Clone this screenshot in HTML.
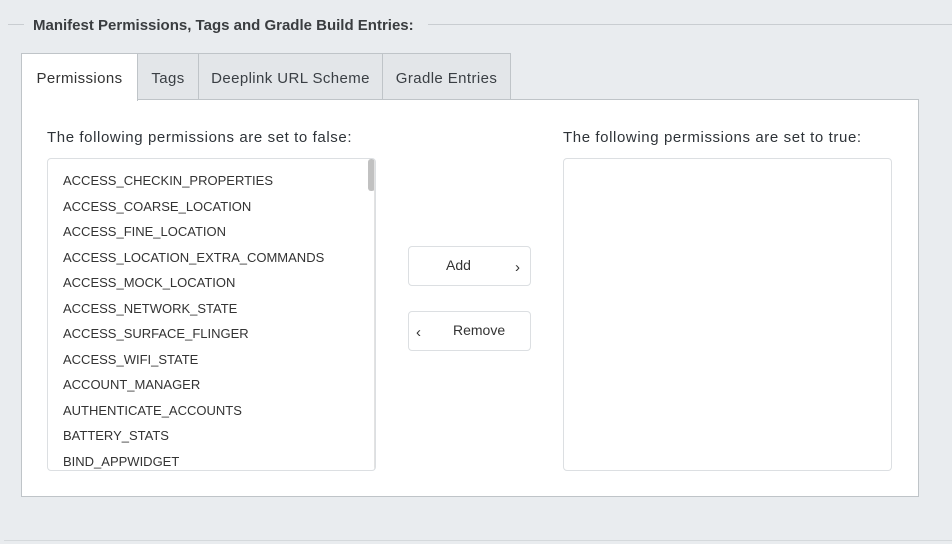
<!DOCTYPE html>
<html><head><style>
body{margin:0;width:952px;height:544px;background:#e9ecef;font-family:"Liberation Sans",Arial,sans-serif;position:relative;overflow:hidden;color:#333}
.a{position:absolute}
.tab{position:absolute;top:53px;height:46px;background:#e3e6e9;border:1px solid #bfc4c8;border-bottom:none;font-size:15px;letter-spacing:0.4px;line-height:49px;text-align:center;color:#3a3f44;box-sizing:border-box}
.box{position:absolute;top:158px;width:329px;height:313px;background:#fff;border:1px solid #dcdfe2;border-radius:4px;box-sizing:border-box;overflow:hidden}
.it{font-size:13px;color:#333;height:25.5px;line-height:25.5px}
.btn{position:absolute;left:408px;width:123px;height:40px;border:1px solid #dcdfe2;border-radius:4px;background:#fff;box-sizing:border-box;font-size:14px;color:#333}
</style></head><body>
<div class="a" style="left:8px;top:24px;width:16px;height:1px;background:#c9cdd1"></div>
<div class="a" style="left:428px;top:24px;width:524px;height:1px;background:#c9cdd1"></div>
<div class="a" style="left:33px;top:17px;font-size:15px;font-weight:bold;color:#3a3d40">Manifest Permissions, Tags and Gradle Build Entries:</div>
<div class="a" style="left:21px;top:99px;width:898px;height:398px;background:#fff;border:1px solid #bfc4c8;box-sizing:border-box"></div>
<div class="tab" style="left:21px;width:117px;background:#fff;height:48px;z-index:2;color:#333">Permissions</div>
<div class="tab" style="left:137px;width:62px">Tags</div>
<div class="tab" style="left:198px;width:185px">Deeplink URL Scheme</div>
<div class="tab" style="left:382px;width:129px">Gradle Entries</div>
<div class="a" style="left:47px;top:129px;font-size:15px;letter-spacing:0.6px;color:#2e3338">The following permissions are set to false:</div>
<div class="a" style="left:563px;top:129px;font-size:15px;letter-spacing:0.6px;color:#2e3338">The following permissions are set to true:</div>
<div class="box" style="left:47px">
<div style="position:absolute;right:0;top:0;width:7px;height:32px;background:#c1c1c1;border-radius:3px"></div>
<div style="position:absolute;right:0;top:0;width:1px;height:100%;background:#e2e2e2"></div>
<div style="padding:9px 0 0 15px">
<div class="it">ACCESS_CHECKIN_PROPERTIES</div>
<div class="it">ACCESS_COARSE_LOCATION</div>
<div class="it">ACCESS_FINE_LOCATION</div>
<div class="it">ACCESS_LOCATION_EXTRA_COMMANDS</div>
<div class="it">ACCESS_MOCK_LOCATION</div>
<div class="it">ACCESS_NETWORK_STATE</div>
<div class="it">ACCESS_SURFACE_FLINGER</div>
<div class="it">ACCESS_WIFI_STATE</div>
<div class="it">ACCOUNT_MANAGER</div>
<div class="it">AUTHENTICATE_ACCOUNTS</div>
<div class="it">BATTERY_STATS</div>
<div class="it">BIND_APPWIDGET</div>
</div></div>
<div class="box" style="left:563px"></div>
<div class="btn" style="top:246px"><span class="a" style="left:37px;top:10px">Add</span><span class="a" style="left:106px;top:12px;font-size:15px">›</span></div>
<div class="btn" style="top:311px"><span class="a" style="left:7px;top:12px;font-size:15px">‹</span><span class="a" style="left:44px;top:10px">Remove</span></div>
<div class="a" style="left:4px;top:540px;width:948px;height:1px;background:#d5d9dc"></div>
</body></html>
